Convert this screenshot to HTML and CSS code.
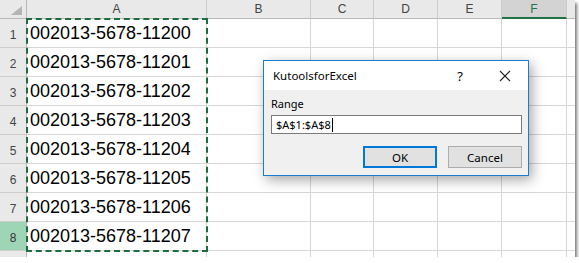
FILE: index.html
```html
<!DOCTYPE html>
<html lang="en">
<head>
    <meta charset="UTF-8">
    <title>Kutools Range</title>
    <link rel="stylesheet" href="styles.css">
</head>
<body>
    <div class="frame">
        <div class="sheet">
            <div class="corner"><span class="tri"></span></div>
            <div class="colhead">A</div>
            <div class="colhead">B</div>
            <div class="colhead">C</div>
            <div class="colhead">D</div>
            <div class="colhead">E</div>
            <div class="colhead sel">F</div>
            <div class="colhead"></div>

            <div class="rowhead">1</div><div class="cell">002013-5678-11200</div><div class="cell"></div><div class="cell"></div><div class="cell"></div><div class="cell"></div><div class="cell"></div><div class="cell"></div>
            <div class="rowhead">2</div><div class="cell">002013-5678-11201</div><div class="cell"></div><div class="cell"></div><div class="cell"></div><div class="cell"></div><div class="cell"></div><div class="cell"></div>
            <div class="rowhead">3</div><div class="cell">002013-5678-11202</div><div class="cell"></div><div class="cell"></div><div class="cell"></div><div class="cell"></div><div class="cell"></div><div class="cell"></div>
            <div class="rowhead">4</div><div class="cell">002013-5678-11203</div><div class="cell"></div><div class="cell"></div><div class="cell"></div><div class="cell"></div><div class="cell"></div><div class="cell"></div>
            <div class="rowhead">5</div><div class="cell">002013-5678-11204</div><div class="cell"></div><div class="cell"></div><div class="cell"></div><div class="cell"></div><div class="cell"></div><div class="cell"></div>
            <div class="rowhead">6</div><div class="cell">002013-5678-11205</div><div class="cell"></div><div class="cell"></div><div class="cell"></div><div class="cell"></div><div class="cell"></div><div class="cell"></div>
            <div class="rowhead">7</div><div class="cell">002013-5678-11206</div><div class="cell"></div><div class="cell"></div><div class="cell"></div><div class="cell"></div><div class="cell"></div><div class="cell"></div>
            <div class="rowhead sel">8</div><div class="cell">002013-5678-11207</div><div class="cell"></div><div class="cell"></div><div class="cell"></div><div class="cell"></div><div class="cell"></div><div class="cell"></div>
            <div class="rowhead"></div><div class="cell"></div><div class="cell"></div><div class="cell"></div><div class="cell"></div><div class="cell"></div><div class="cell"></div><div class="cell"></div>
        </div>

        <!-- copy marquee round A1:A8 -->
        <div class="marquee"></div>

        <div class="dialog">
            <div class="title">
                <span class="title-text">KutoolsforExcel</span>
                <span class="help">?</span>
                <svg class="close" width="12" height="12" viewBox="0 0 12 12">
                    <path d="M1 1 L11 11 M11 1 L1 11" stroke="#222" stroke-width="1.1" fill="none"/>
                </svg>
            </div>
            <div class="body">
                <label class="label">Range</label>
                <div class="input">$A$1:$A$8<span class="caret"></span></div>
                <div class="buttons">
                    <button class="btn ok">OK</button>
                    <button class="btn">Cancel</button>
                </div>
            </div>
        </div>
    </div>
</body>
</html>
```

FILE: styles.css
```css
body {
    margin: 0;
    background: #ffffff;
}

.frame {
    position: relative;
    width: 575px;
    height: 257px;
    overflow: hidden;
    box-shadow: 2px 3px 3px #7a7a7a;
}

.sheet {
    display: grid;
    grid-template-columns: 27px 180px 104px 63px 64px 64px 65px 20px;
    grid-template-rows: 19px repeat(9, 29px);
    background: #fff;
}

.corner,
.colhead,
.rowhead {
    background: #e9e9e9;
    color: #444;
    font-family: "Liberation Sans", Arial, sans-serif;
    font-size: 12px;
    box-sizing: border-box;
    border-right: 1px solid #cdcdcd;
    border-bottom: 1px solid #cdcdcd;
}

.corner {
    position: relative;
    border-right: 1px solid #b9b9b9;
    border-bottom: 1px solid #b9b9b9;
}

.tri {
    position: absolute;
    right: 4px;
    bottom: 3px;
    width: 0;
    height: 0;
    border-left: 11px solid transparent;
    border-bottom: 9px solid #b4b4b4;
}

.colhead {
    display: flex;
    align-items: center;
    justify-content: center;
    border-bottom: 1px solid #b9b9b9;
}

.colhead.sel {
    background: #d3d3d3;
    border-bottom: 2px solid #217346;
    color: #217346;
}

.rowhead {
    display: flex;
    align-items: flex-end;
    justify-content: center;
    padding-bottom: 5px;
    border-right: 1px solid #b9b9b9;
}

.rowhead.sel {
    background: #9fd5b7;
    color: #333;
}

.cell {
    box-sizing: border-box;
    border-right: 1px solid #d6d6d6;
    border-bottom: 1px solid #d6d6d6;
    font-family: "Liberation Sans", Arial, sans-serif;
    font-size: 18px;
    color: #000;
    display: flex;
    align-items: flex-end;
    padding: 0 0 3px 3px;
    white-space: nowrap;
}

.marquee {
    position: absolute;
    left: 26px;
    top: 18px;
    width: 182px;
    height: 234px;
    box-sizing: border-box;
    border: 2px dashed #1d6b41;
}

.dialog {
    position: absolute;
    left: 263px;
    top: 60px;
    width: 266px;
    height: 116px;
    box-sizing: border-box;
    border: 1px solid #1a7bd0;
    background: #f0f0f0;
    box-shadow: 3px 4px 12px rgba(0, 0, 0, 0.35);
    font-family: "Noto Sans", "Open Sans", sans-serif;
    font-size: 11px;
    color: #000;
    display: flex;
    flex-direction: column;
}

.title {
    height: 29px;
    background: #fff;
    display: flex;
    align-items: center;
    padding-left: 9px;
}

.title-text {
    flex: 1;
    font-size: 11.5px;
}

.help {
    margin-right: 36px;
    font-size: 13px;
}

.close {
    margin-right: 17px;
}

.body {
    display: flex;
    flex-direction: column;
    padding: 7px 6px 0 7px;
}

.label {
    line-height: 14px;
    margin-bottom: 4px;
}

.input {
    height: 19px;
    box-sizing: border-box;
    border: 1px solid #7a7a7a;
    background: #fff;
    padding-left: 4px;
    display: flex;
    align-items: center;
    line-height: 16px;
}

.caret {
    display: inline-block;
    width: 1px;
    height: 14px;
    background: #000;
    margin-left: 1px;
}

.buttons {
    display: flex;
    justify-content: flex-end;
    gap: 11px;
    margin-top: 12px;
}

.btn {
    width: 74px;
    height: 22px;
    box-sizing: border-box;
    border: 1px solid #adadad;
    background: #e1e1e1;
    font-family: "Noto Sans", "Open Sans", sans-serif;
    font-size: 11.5px;
    color: #000;
    padding: 0;
}

.btn.ok {
    border: 2px solid #0078d7;
}
```
